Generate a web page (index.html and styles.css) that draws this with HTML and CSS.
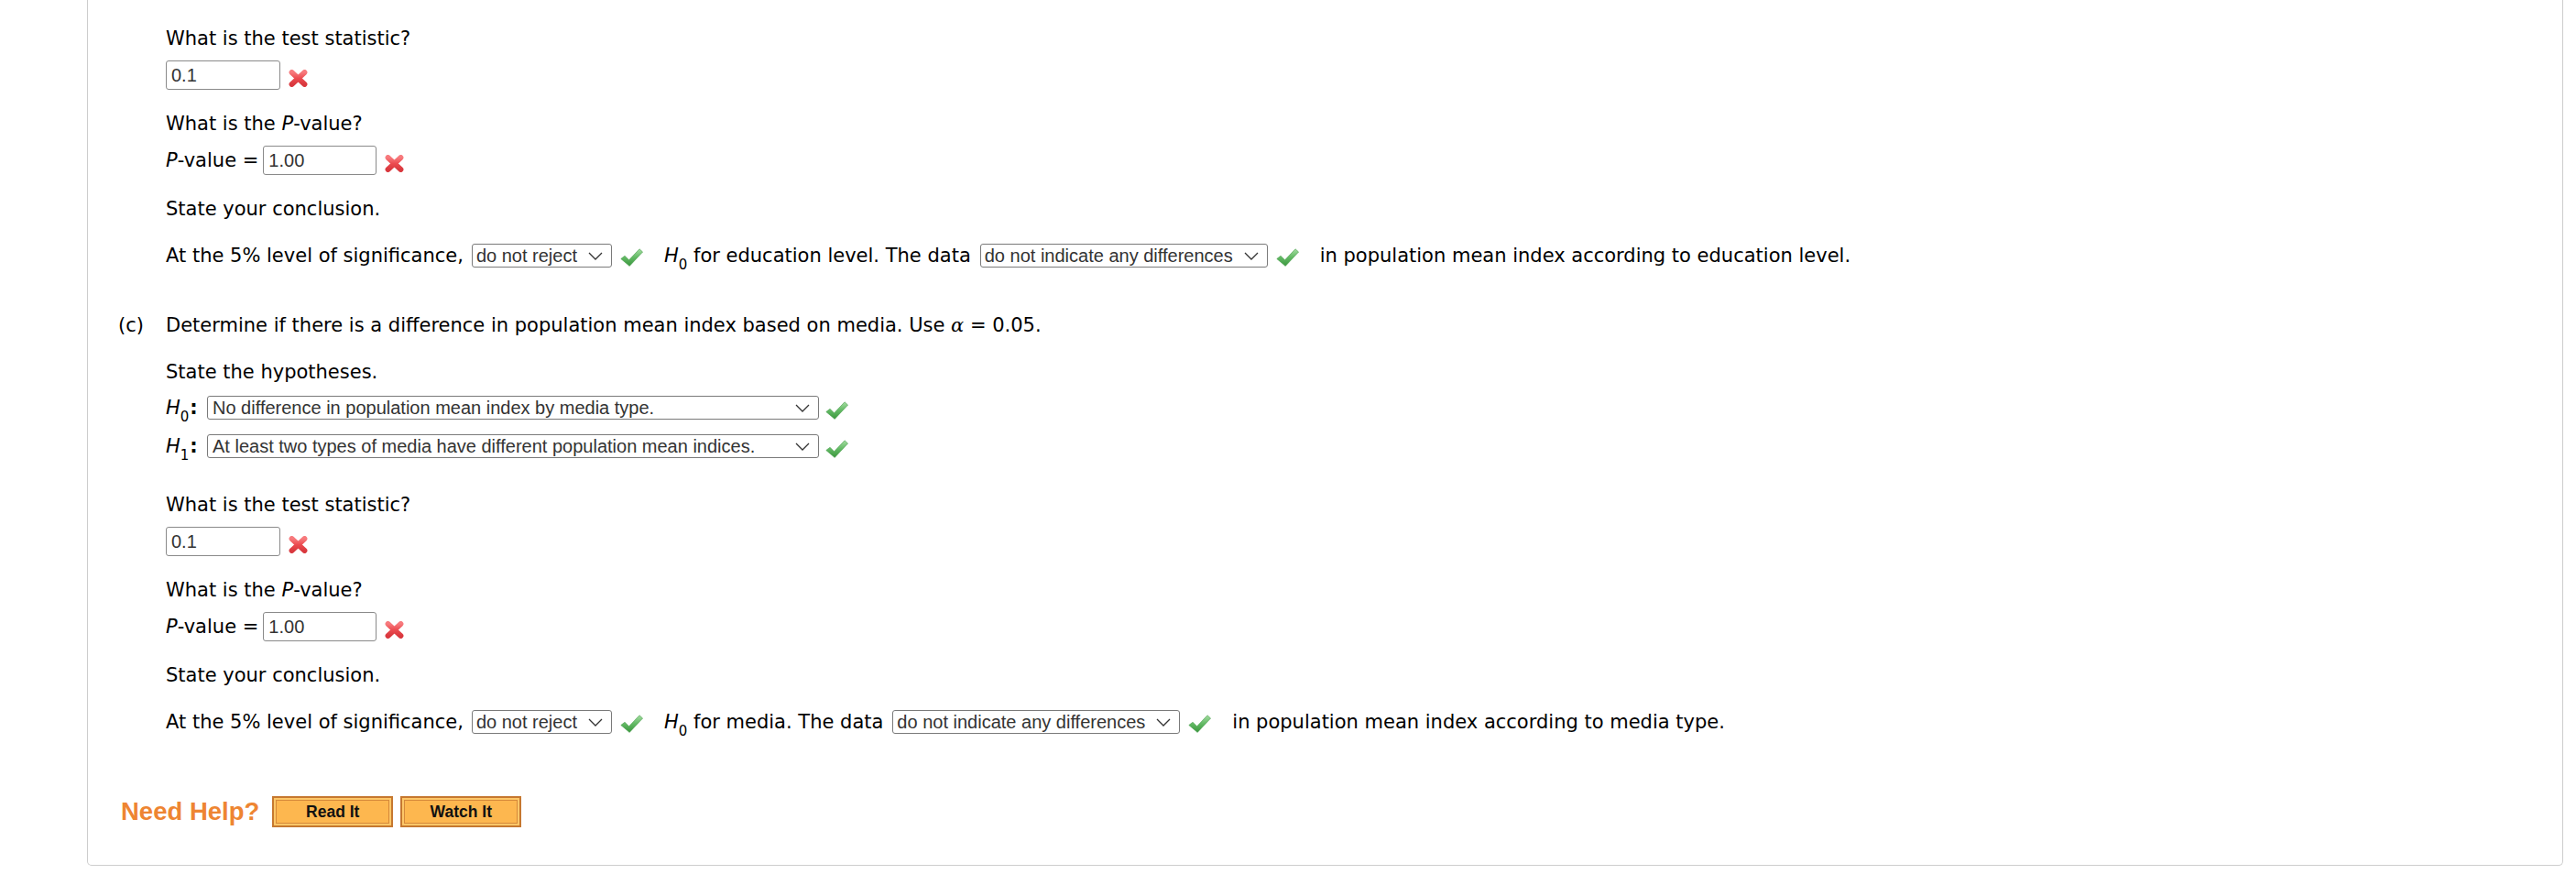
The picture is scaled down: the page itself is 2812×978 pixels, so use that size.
FILE: index.html
```html
<!DOCTYPE html>
<html>
<head>
<meta charset="utf-8">
<link rel="stylesheet" href="styles.css">
</head>
<body>
<svg class="defs" width="0" height="0" aria-hidden="true">
  <defs>
    <linearGradient id="gcheck" x1="0" y1="0" x2="0" y2="1">
      <stop offset="0" stop-color="#a3dca0"/>
      <stop offset="0.5" stop-color="#62b964"/>
      <stop offset="1" stop-color="#3a963d"/>
    </linearGradient>
    <linearGradient id="gx" x1="0" y1="0" x2="0" y2="1">
      <stop offset="0" stop-color="#f77a7d"/>
      <stop offset="0.5" stop-color="#ec4b50"/>
      <stop offset="1" stop-color="#d9383e"/>
    </linearGradient>
    <symbol id="check" viewBox="0 0 25 20">
      <path d="M0.8 11.5 L5 8.3 L9.6 12.8 L21 0.8 L24.6 4 L10.2 19.4 Z" fill="url(#gcheck)" stroke="#4e9f50" stroke-width="0.6" stroke-linejoin="round"/>
    </symbol>
    <symbol id="cross" viewBox="0 0 21 19">
      <path d="M3.5 3 L17.5 16 M17.5 3 L3.5 16" stroke="url(#gx)" stroke-width="5.8" stroke-linecap="round" fill="none"/>
    </symbol>
    <symbol id="chev" viewBox="0 0 16 9">
      <path d="M1 1 L8 8 L15 1" fill="none" stroke="#333" stroke-width="1.3"/>
    </symbol>
  </defs>
</svg>

<div class="question">
  <div class="part">
    <div class="part-label"></div>
    <div class="part-body">
      <p class="q first">What is the test statistic?</p>
      <div class="row">
        <span class="input">0.1</span>
        <svg class="cross"><use href="#cross"/></svg>
      </div>

      <p class="q">What is the <i>P</i>-value?</p>
      <div class="row">
        <span class="lbl"><i>P</i>-value =</span>
        <span class="input pval">1.00</span>
        <svg class="cross"><use href="#cross"/></svg>
      </div>

      <p class="q">State your conclusion.</p>
      <div class="row sentence">
        <span>At the 5% level of significance,</span>
        <span class="select"><span>do not reject</span><svg class="chev"><use href="#chev"/></svg></span>
        <svg class="check"><use href="#check"/></svg>
        <span><i>H</i><sub>0</sub> for education level. The data</span>
        <span class="select sel2"><span>do not indicate any differences</span><svg class="chev"><use href="#chev"/></svg></span>
        <svg class="check"><use href="#check"/></svg>
        <span>in population mean index according to education level.</span>
      </div>
    </div>
  </div>

  <div class="part part-c">
    <div class="part-label">(c)</div>
    <div class="part-body">
      <p class="q first">Determine if there is a difference in population mean index based on media. Use <i class="alpha">α</i> = 0.05.</p>
      <p class="q hyp-title">State the hypotheses.</p>
      <div class="row hyp">
        <span class="hlabel"><i>H</i><sub>0</sub><b>:</b></span>
        <span class="select wide"><span>No difference in population mean index by media type.</span><svg class="chev"><use href="#chev"/></svg></span>
        <svg class="check hcheck"><use href="#check"/></svg>
      </div>
      <div class="row hyp hyp2">
        <span class="hlabel"><i>H</i><sub>1</sub><b>:</b></span>
        <span class="select wide"><span>At least two types of media have different population mean indices.</span><svg class="chev"><use href="#chev"/></svg></span>
        <svg class="check hcheck"><use href="#check"/></svg>
      </div>

      <p class="q after-hyp">What is the test statistic?</p>
      <div class="row">
        <span class="input">0.1</span>
        <svg class="cross"><use href="#cross"/></svg>
      </div>

      <p class="q">What is the <i>P</i>-value?</p>
      <div class="row">
        <span class="lbl"><i>P</i>-value =</span>
        <span class="input pval">1.00</span>
        <svg class="cross"><use href="#cross"/></svg>
      </div>

      <p class="q">State your conclusion.</p>
      <div class="row sentence">
        <span>At the 5% level of significance,</span>
        <span class="select"><span>do not reject</span><svg class="chev"><use href="#chev"/></svg></span>
        <svg class="check"><use href="#check"/></svg>
        <span><i>H</i><sub>0</sub> for media. The data</span>
        <span class="select sel2"><span>do not indicate any differences</span><svg class="chev"><use href="#chev"/></svg></span>
        <svg class="check"><use href="#check"/></svg>
        <span>in population mean index according to media type.</span>
      </div>
    </div>
  </div>

  <div class="help">
    <span class="need">Need Help?</span>
    <span class="btn">Read It</span>
    <span class="btn">Watch It</span>
  </div>
</div>
</body>
</html>
```

FILE: styles.css
```css
* { box-sizing: border-box; }

body {
  margin: 0;
  background: #fff;
  color: #000;
  font-family: "DejaVu Sans", Verdana, sans-serif;
  font-size: 21px;
}

.defs { position: absolute; width: 0; height: 0; overflow: hidden; }

.question {
  margin: 0 14px 0 95px;
  border: 1px solid #cdcdcd;
  border-top: none;
  border-radius: 0 0 5px 5px;
  padding: 27px 0 41px 33px;
}

.part {
  display: grid;
  grid-template-columns: 52px 1fr;
}

.part-c { margin-top: 46px; }

.part-label { line-height: 30px; }

.q {
  margin: 22px 0 0;
  line-height: 30px;
  white-space: nowrap;
}
.q.first { margin-top: 0; }
.q.hyp-title { margin-top: 21px; }
.q.after-hyp { margin-top: 34px; }

.row {
  display: flex;
  align-items: center;
  margin-top: 9px;
  line-height: 30px;
  white-space: nowrap;
}
.row.sentence { margin-top: 21px; }
.row.hyp2 { margin-top: 12px; }

sub {
  font-size: 15px;
  vertical-align: -8px;
  line-height: 0;
}

.alpha { font-family: "DejaVu Serif", serif; }

.input {
  display: inline-flex;
  align-items: center;
  width: 125px;
  height: 32px;
  border: 1px solid #8a8a8a;
  border-radius: 3px;
  padding: 0 5px;
  font-family: "Liberation Sans", Arial, sans-serif;
  font-size: 20px;
  color: #333;
}
.input.pval { width: 124px; }

.lbl { margin-right: 5px; }

.cross {
  width: 21px;
  height: 19px;
  margin: 6px 0 0 9px;
}

.select {
  display: inline-flex;
  align-items: center;
  height: 26px;
  border: 1px solid #7a7a7a;
  border-radius: 3px;
  padding: 0 9px 0 4px;
  margin-left: 9px;
  font-family: "Liberation Sans", Arial, sans-serif;
  font-size: 20px;
  color: #333;
  line-height: 24px;
}
.select.sel2 { margin-left: 10px; }
.select.wide {
  width: 668px;
  margin-left: 0;
  padding-left: 5px;
  justify-content: space-between;
}

.chev {
  width: 16px;
  height: 9px;
  margin-left: 12px;
}

.check {
  width: 25px;
  height: 20px;
  margin: 4px 23px 0 9px;
}
.hcheck { margin: 6px 0 0 7px; }

.hlabel { width: 45px; }
.hlabel b { font-weight: bold; margin-left: 1px; }

.help {
  display: flex;
  align-items: center;
  margin: 66px 0 0 3px;
}

.need {
  font-family: "Liberation Sans", Arial, sans-serif;
  font-weight: bold;
  font-size: 27.5px;
  color: #ee8532;
  margin-right: 14px;
}

.btn {
  display: inline-flex;
  align-items: center;
  justify-content: center;
  width: 132px;
  height: 34px;
  margin-right: 8px;
  border: 2px solid #c6782f;
  background: #fdb74f;
  box-shadow: inset 0 0 0 2px #fdc768, inset 0 0 0 3px #d5893a;
  font-family: "Liberation Sans", Arial, sans-serif;
  font-weight: bold;
  font-size: 17.5px;
  color: #111;
}
```
